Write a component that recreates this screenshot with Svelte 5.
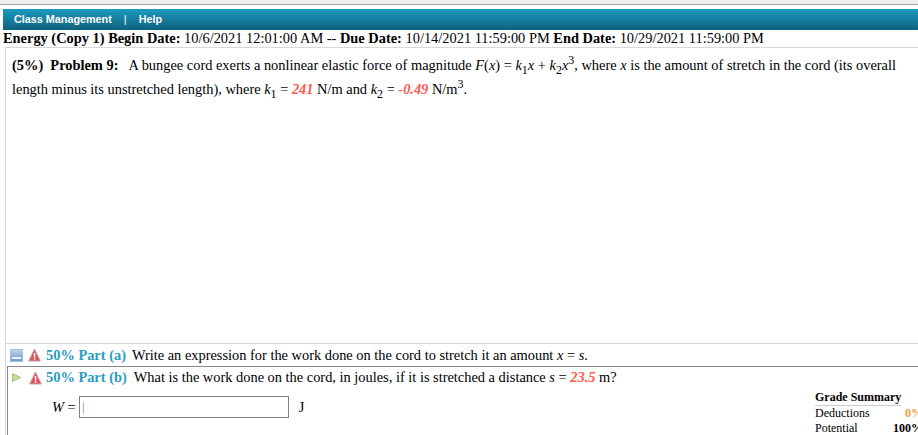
<script>
  const summary = [
    { label: "Deductions", value: "0%", warn: true },
    { label: "Potential", value: "100%", warn: false },
  ];
</script>

<div class="page">
  <div class="topline"></div>
  <nav class="nav">
    <a href="#top">Class Management</a>
    <span class="sep">|</span>
    <a href="#top">Help</a>
  </nav>
  <div class="dates">
    <b>Energy (Copy 1) Begin Date:</b> 10/6/2021 12:01:00 AM -- <b>Due Date:</b> 10/14/2021 11:59:00 PM <b>End Date:</b> 10/29/2021 11:59:00 PM
  </div>

  <main class="panel">
    <section class="problem">
      <p>
        <b>(5%)&nbsp; Problem 9:</b>&nbsp;&nbsp; A bungee cord exerts a nonlinear elastic force of magnitude <i>F</i>(<i>x</i>) = <i>k</i><sub>1</sub><i>x</i> + <i>k</i><sub>2</sub><i>x</i><sup>3</sup>, where <i>x</i> is the amount of stretch in the cord (its overall
      </p>
      <p>
        length minus its unstretched length), where <i>k</i><sub>1</sub> = <i class="val">241</i> N/m and <i>k</i><sub>2</sub> = <i class="val">-0.49</i> N/m<sup>3</sup>.
      </p>
    </section>

    <div class="part part-a">
      <svg class="ico" width="13" height="13" viewBox="0 0 13 13">
        <defs>
          <linearGradient id="minus" x1="0" y1="0" x2="0" y2="1">
            <stop offset="0" stop-color="#c3d8ee" />
            <stop offset="0.5" stop-color="#8fb4dc" />
            <stop offset="1" stop-color="#6c9bd0" />
          </linearGradient>
        </defs>
        <rect x="0.5" y="0.5" width="12" height="12" fill="url(#minus)" stroke="#a8bdd2" />
        <rect x="2" y="8" width="9" height="2" fill="#e8f0f8" />
      </svg>
      <svg class="ico warn" width="13" height="14" viewBox="0 0 13 14">
        <path d="M6.5 1 L12.3 13 H0.7 Z" fill="#e0525a" stroke="#c9a0a0" stroke-width="1" stroke-linejoin="round" />
        <rect x="5.8" y="5" width="1.5" height="4.5" fill="#fff" />
        <rect x="5.8" y="10.2" width="1.5" height="1.6" fill="#fff" />
      </svg>
      <span class="pct">50% Part (a)</span>
      <span class="q">Write an expression for the work done on the cord to stretch it an amount <i>x</i> = <i>s</i>.</span>
    </div>

    <div class="part-b">
      <div class="part">
        <svg class="ico" width="11" height="11" viewBox="0 0 11 11">
          <path d="M1.5 1.5 L9.5 5.5 L1.5 9.5 Z" fill="#c4dc9a" stroke="#a9c47a" stroke-linejoin="round" />
        </svg>
        <svg class="ico warn" width="13" height="14" viewBox="0 0 13 14">
          <path d="M6.5 1 L12.3 13 H0.7 Z" fill="#e0525a" stroke="#c9a0a0" stroke-width="1" stroke-linejoin="round" />
          <rect x="5.8" y="5" width="1.5" height="4.5" fill="#fff" />
          <rect x="5.8" y="10.2" width="1.5" height="1.6" fill="#fff" />
        </svg>
        <span class="pct">50% Part (b)</span>
        <span class="q">What is the work done on the cord, in joules, if it is stretched a distance <i>s</i> = <i class="val">23.5</i> m?</span>
      </div>
      <div class="answer">
        <div class="field">
          <i>W</i>&nbsp;=
          <span class="box"><span class="caret"></span></span>
          <span class="unit">J</span>
        </div>
        <aside class="grade">
          <div class="grade-title">Grade Summary</div>
          {#each summary as row}
            <div class="grade-row">
              <span>{row.label}</span>
              <span class:warn-val={row.warn}>{row.value}</span>
            </div>
          {/each}
        </aside>
      </div>
    </div>
  </main>
</div>

<style>
  :global(body) {
    margin: 0;
    overflow: hidden;
    background: #fff;
  }
  .page {
    width: 918px;
    height: 435px;
    overflow: hidden;
    font-family: "Liberation Serif", "Times New Roman", serif;
    color: #000;
    background: #fff;
  }
  .topline {
    height: 4px;
    background: #eeeeee;
    border-bottom: 1px solid #a8a8a8;
    margin-bottom: 4px;
  }
  .nav {
    margin-left: 3px;
    height: 21px;
    box-sizing: border-box;
    padding: 4px 0 0 11px;
    display: flex;
    gap: 12px;
    background: linear-gradient(#1c9bc0, #10607c);
    font: bold 10.8px "Liberation Sans", Arial, sans-serif;
    color: #fff;
  }
  .nav a {
    color: #fff;
    text-decoration: none;
  }
  .sep {
    font-weight: normal;
  }
  .dates {
    margin-left: 3px;
    height: 17px;
    font-size: 14.4px;
    line-height: 17px;
    white-space: nowrap;
  }
  .panel {
    margin-left: 5px;
    height: 388px;
    border-top: 1px solid #d8d8d8;
    border-left: 1px solid #d8d8d8;
    display: flex;
    flex-direction: column;
  }
  .problem {
    flex: 1;
    padding: 5px 0 0 6px;
    font-size: 14.4px;
  }
  .problem p {
    margin: 0;
    height: 24px;
    line-height: 24px;
    white-space: nowrap;
  }
  sub,
  sup {
    font-size: 12px;
    line-height: 0;
  }
  .val {
    color: #ff5a50;
    font-weight: bold;
  }
  .part {
    display: flex;
    align-items: center;
    height: 21px;
    font-size: 14.4px;
    white-space: nowrap;
  }
  .part-a {
    height: 23px;
    border-top: 1px solid #d8d8d8;
    padding-left: 4px;
    box-sizing: border-box;
  }
  .ico {
    flex: none;
  }
  .warn {
    margin-left: 5px;
  }
  .part-b .warn {
    margin-left: 7px;
  }
  .pct {
    margin-left: 5px;
    color: #2a9bbf;
    font-weight: bold;
  }
  .part-b .pct {
    margin-left: 4px;
  }
  .q {
    margin-left: 6px;
  }
  .part-b .q {
    margin-left: 7px;
  }
  .part-b {
    flex: none;
    height: 69px;
    margin-left: 1px;
    border-top: 1px solid #888;
    border-left: 1px solid #888;
    padding-left: 3px;
  }
  .answer {
    display: flex;
    justify-content: space-between;
    font-size: 14.4px;
  }
  .field {
    display: flex;
    align-items: center;
    height: 22px;
    margin: 8px 0 0 41px;
  }
  .box {
    display: block;
    box-sizing: border-box;
    width: 210px;
    height: 22px;
    margin-left: 3px;
    border: 1px solid #808080;
    padding: 5px 3px;
  }
  .caret {
    display: block;
    width: 1px;
    height: 12px;
    background: #f0a0a0;
  }
  .unit {
    margin-left: 10px;
  }
  .grade {
    width: 108px;
    flex: none;
    margin-top: 2px;
    margin-right: -5px;
    font-size: 12px;
    white-space: nowrap;
  }
  .grade-title {
    font-weight: bold;
    border-bottom: 1px solid #ccc;
    line-height: 15px;
    width: 86px;
  }
  .grade-row {
    display: flex;
    justify-content: space-between;
    line-height: 15px;
  }
  .grade-row span:last-child {
    font-weight: bold;
  }
  .warn-val {
    color: #f59a3c;
  }
</style>
